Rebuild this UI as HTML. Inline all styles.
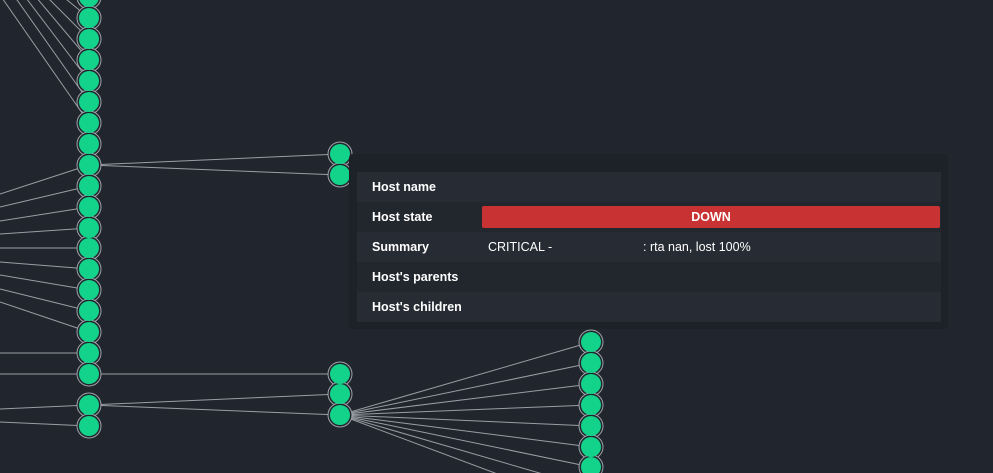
<!DOCTYPE html>
<html><head><meta charset="utf-8"><style>
html,body{margin:0;padding:0;width:993px;height:473px;overflow:hidden;background:#21252d;font-family:"Liberation Sans",sans-serif}
svg{position:absolute;left:0;top:0;overflow:hidden}
.tip{position:absolute;left:349px;top:154px;width:599px;height:175px;background:#1d2128;border-radius:4px}
.row{position:absolute;left:8px;width:584px;height:30px;color:#fff;font-size:12.5px;line-height:30px}
.row b{position:absolute;left:15px}
.a{background:#272c34}.b{background:#22262d}
.val{position:absolute;left:131px}
.bar{position:absolute;left:125px;top:4px;width:458px;height:22px;background:#c83233;border-radius:2px;text-align:center;line-height:22px;font-weight:bold}
</style></head><body>
<svg width="993" height="473" viewBox="0 0 993 473">
<g stroke="#b0b4b8" stroke-width="1" fill="none" opacity="0.85">
<line x1="65" y1="-10" x2="89" y2="-3"/>
<line x1="55" y1="-10" x2="89" y2="18"/>
<line x1="40" y1="-10" x2="89" y2="39"/>
<line x1="30" y1="-10" x2="89" y2="60"/>
<line x1="20" y1="-10" x2="89" y2="81"/>
<line x1="10" y1="-10" x2="89" y2="102"/>
<line x1="0" y1="-5" x2="89" y2="123"/>
<line x1="0" y1="194" x2="89" y2="165"/>
<line x1="0" y1="207" x2="89" y2="186"/>
<line x1="0" y1="221" x2="89" y2="207"/>
<line x1="0" y1="234" x2="89" y2="228"/>
<line x1="0" y1="248" x2="89" y2="248"/>
<line x1="0" y1="262" x2="89" y2="269"/>
<line x1="0" y1="275" x2="89" y2="290"/>
<line x1="0" y1="289" x2="89" y2="311"/>
<line x1="0" y1="302" x2="89" y2="332"/>
<line x1="0" y1="353" x2="89" y2="353"/>
<line x1="0" y1="374" x2="89" y2="374"/>
<line x1="0" y1="409" x2="89" y2="405"/>
<line x1="0" y1="422" x2="89" y2="426"/>
<line x1="89" y1="165" x2="340" y2="154"/>
<line x1="89" y1="165" x2="340" y2="175"/>
<line x1="89" y1="374" x2="340" y2="374"/>
<line x1="89" y1="405" x2="340" y2="394"/>
<line x1="89" y1="405" x2="340" y2="415"/>
<line x1="340" y1="415" x2="591" y2="342"/>
<line x1="340" y1="415" x2="591" y2="363"/>
<line x1="340" y1="415" x2="591" y2="384"/>
<line x1="340" y1="415" x2="591" y2="405"/>
<line x1="340" y1="415" x2="591" y2="426"/>
<line x1="340" y1="415" x2="591" y2="447"/>
<line x1="340" y1="415" x2="591" y2="467"/>
<line x1="340" y1="415" x2="591" y2="488"/>
<line x1="340" y1="415" x2="591" y2="509"/>
</g>
<g stroke="#9ea3a8" stroke-width="1" fill="#21252d">
<circle cx="89" cy="-3" r="12"/><circle cx="89" cy="18" r="12"/><circle cx="89" cy="39" r="12"/><circle cx="89" cy="60" r="12"/><circle cx="89" cy="81" r="12"/><circle cx="89" cy="102" r="12"/><circle cx="89" cy="123" r="12"/><circle cx="89" cy="144" r="12"/><circle cx="89" cy="165" r="12"/><circle cx="89" cy="186" r="12"/><circle cx="89" cy="207" r="12"/><circle cx="89" cy="228" r="12"/><circle cx="89" cy="248" r="12"/><circle cx="89" cy="269" r="12"/><circle cx="89" cy="290" r="12"/><circle cx="89" cy="311" r="12"/><circle cx="89" cy="332" r="12"/><circle cx="89" cy="353" r="12"/><circle cx="89" cy="374" r="12"/><circle cx="89" cy="405" r="12"/><circle cx="89" cy="426" r="12"/>
<circle cx="340" cy="154" r="12"/><circle cx="340" cy="175" r="12"/><circle cx="340" cy="374" r="12"/><circle cx="340" cy="394" r="12"/><circle cx="340" cy="415" r="12"/>
<circle cx="591" cy="342" r="12"/><circle cx="591" cy="363" r="12"/><circle cx="591" cy="384" r="12"/><circle cx="591" cy="405" r="12"/><circle cx="591" cy="426" r="12"/><circle cx="591" cy="447" r="12"/><circle cx="591" cy="467" r="12"/>
</g>
<g fill="#13d38b">
<circle cx="89" cy="-3" r="10"/><circle cx="89" cy="18" r="10"/><circle cx="89" cy="39" r="10"/><circle cx="89" cy="60" r="10"/><circle cx="89" cy="81" r="10"/><circle cx="89" cy="102" r="10"/><circle cx="89" cy="123" r="10"/><circle cx="89" cy="144" r="10"/><circle cx="89" cy="165" r="10"/><circle cx="89" cy="186" r="10"/><circle cx="89" cy="207" r="10"/><circle cx="89" cy="228" r="10"/><circle cx="89" cy="248" r="10"/><circle cx="89" cy="269" r="10"/><circle cx="89" cy="290" r="10"/><circle cx="89" cy="311" r="10"/><circle cx="89" cy="332" r="10"/><circle cx="89" cy="353" r="10"/><circle cx="89" cy="374" r="10"/><circle cx="89" cy="405" r="10"/><circle cx="89" cy="426" r="10"/>
<circle cx="340" cy="154" r="10"/><circle cx="340" cy="175" r="10"/><circle cx="340" cy="374" r="10"/><circle cx="340" cy="394" r="10"/><circle cx="340" cy="415" r="10"/>
<circle cx="591" cy="342" r="10"/><circle cx="591" cy="363" r="10"/><circle cx="591" cy="384" r="10"/><circle cx="591" cy="405" r="10"/><circle cx="591" cy="426" r="10"/><circle cx="591" cy="447" r="10"/><circle cx="591" cy="467" r="10"/>
</g>
</svg>
<div class="tip">
<div class="row a" style="top:18px"><b>Host name</b></div>
<div class="row b" style="top:48px"><b>Host state</b><div class="bar">DOWN</div></div>
<div class="row a" style="top:78px"><b>Summary</b><span class="val">CRITICAL -</span><span class="val" style="left:286px">: rta nan, lost 100%</span></div>
<div class="row b" style="top:108px"><b>Host's parents</b></div>
<div class="row a" style="top:138px"><b>Host's children</b></div>
</div>
</body></html>
